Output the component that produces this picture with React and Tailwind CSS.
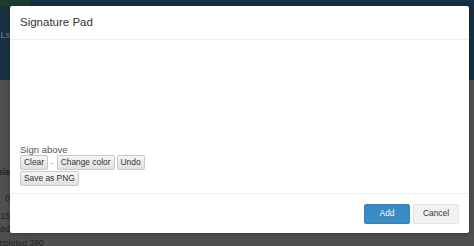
import React from "react";

const btn =
  "h-[15px] px-[3px] text-[8.4px] leading-none text-[#333] border border-[#c8c8c8] rounded-[2px] bg-gradient-to-b from-[#f7f7f7] to-[#e0e0e0]";

const SignaturePad = () => {
  return (
    <div className="absolute left-[10px] top-[6px] w-[459px] h-[227px] bg-white rounded-[2px] shadow-[0_1px_4px_rgba(0,0,0,0.3)] flex flex-col">
      <div className="h-[34px] flex items-center px-[10px] border-b border-[#eeeeee]">
        <h4 className="text-[11.5px] text-[#333]">Signature Pad</h4>
      </div>
      <div className="flex-1 flex flex-col justify-end px-[10px] pb-[7px] border-b border-[#eeeeee]">
        <div className="text-[9.5px] text-[#555] leading-[11px]">Sign above</div>
        <div className="flex items-center gap-[2px]">
          <button className={btn}>Clear</button>
          <span className="text-[8px] text-[#777] px-[1px]">-</span>
          <button className={btn}>Change color</button>
          <button className={btn}>Undo</button>
        </div>
        <div className="flex mt-[1px]">
          <button className={btn}>Save as PNG</button>
        </div>
      </div>
      <div className="h-[39px] flex items-center justify-end gap-[3px] px-[10px]">
        <button className="w-[46px] h-[20px] text-[8.4px] text-white bg-[#3a8ac3] border border-[#3580b6] rounded-[2px]">
          Add
        </button>
        <button className="w-[46px] h-[20px] text-[8.4px] text-[#333] bg-[#f2f2f2] border border-[#e3e3e3] rounded-[2px]">
          Cancel
        </button>
      </div>
    </div>
  );
};

export default function App() {
  return (
    <div
      className="relative w-[474px] h-[246px] overflow-hidden bg-[#4f4f4f]"
      style={{ fontFamily: "'Liberation Sans', Arial, sans-serif" }}
    >
      <div className="h-[80px] bg-[#17303f] flex flex-col">
        <div className="h-[6px] bg-[#1f3a2c] w-[30px]" />
        <div className="w-[10px] flex justify-end mt-[23px] text-[9px] text-[#6d8596] whitespace-nowrap">Ls</div>
      </div>
      <div className="flex flex-col text-[8.5px] leading-[10px] text-[#222] whitespace-nowrap">
        <div className="w-[10px] flex justify-end mt-[87px] font-bold">Thesis</div>
        <div className="w-[10px] flex justify-end mt-[16px]">0</div>
        <div className="w-[10px] flex justify-end mt-[8px]">2015</div>
        <div className="w-[10px] flex justify-end mt-[3px]">ted</div>
        <div className="mt-[4px] -ml-[3px]">mpleted 390</div>
      </div>
      <SignaturePad />
    </div>
  );
}
